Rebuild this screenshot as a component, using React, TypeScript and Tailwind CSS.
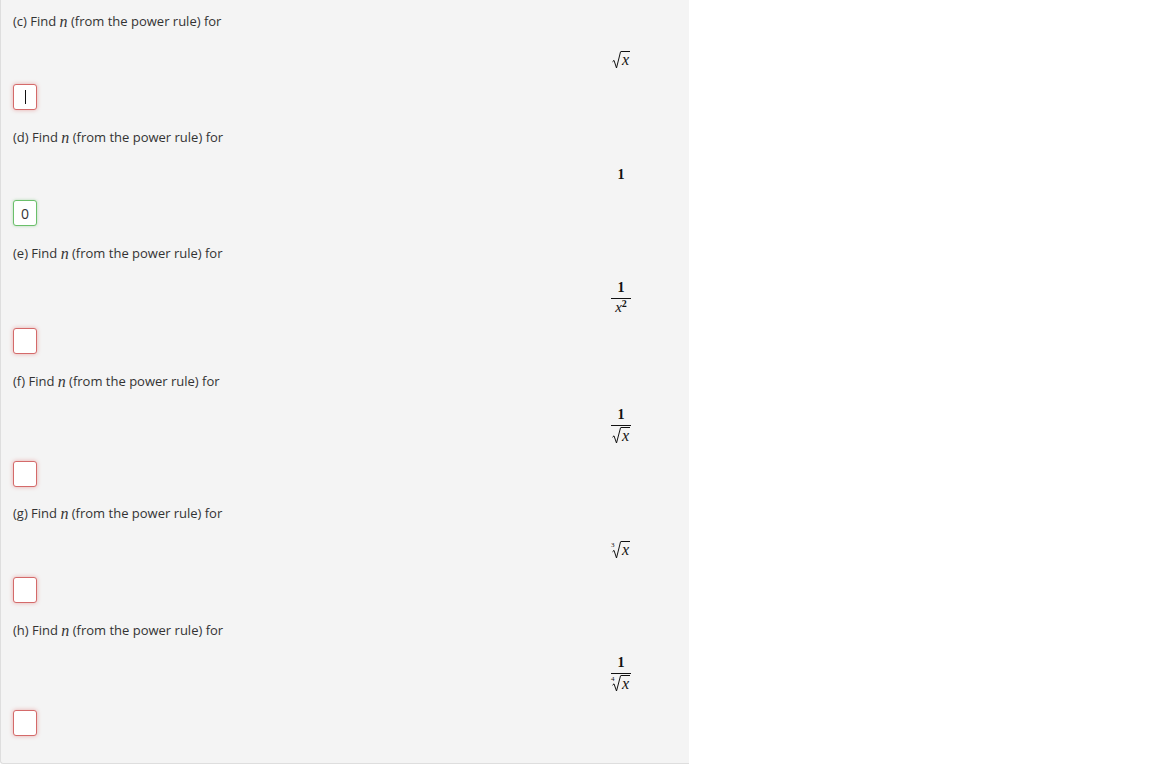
import React from 'react';

const serif = "font-['Liberation_Serif','DejaVu_Serif',serif]";

const Radical = ({ h }: { h: number }) => (
    <svg width="9" height={h} viewBox={`0 0 9 ${h}`} className="block shrink-0">
        <path d={`M0.5 ${h * 0.6} L2 ${h * 0.52} L4.5 ${h - 1} L8.6 0.5`} fill="none" stroke="#111" strokeWidth="1" />
    </svg>
);

const Sqrt = ({ index, h = 18 }: { index?: string; h?: number }) => (
    <span className="relative inline-flex items-start">
        {index && <span className={`absolute left-[-1px] top-[1px] text-[7px] leading-none ${serif}`}>{index}</span>}
        <Radical h={h} />
        <span className={`border-t border-[#111] pl-[1px] pr-[1px] text-[16px] italic leading-[16px] ${serif}`}>x</span>
    </span>
);

const Frac = ({ den }: { den: React.ReactNode }) => (
    <span className={`inline-flex flex-col items-center ${serif}`}>
        <span className="text-[14px] font-bold leading-[15px]">1</span>
        <span className="mt-[3px] h-px w-full min-w-[20px] bg-[#111]" />
        <span className="mt-[1px] flex">{den}</span>
    </span>
);

const Field = ({ value, ok, focused }: { value?: string; ok?: boolean; focused?: boolean }) => (
    <div
        className={`flex h-[26px] w-[24px] items-center justify-center rounded-[3px] border bg-white text-[14px] text-[#333] ${
            ok ? 'border-[#6bbf6b] shadow-[0_0_3px_rgba(92,184,92,0.45)]' : 'border-[#d46a6a] shadow-[0_0_4px_rgba(217,83,79,0.45)]'
        }`}
    >
        {value}
        {focused && <span className="h-[14px] w-px bg-[#111]" />}
    </div>
);

type Row = {
    label: string;
    math: React.ReactNode;
    mathH: string;
    gaps: [string, string, string];
    value?: string;
    ok?: boolean;
    focused?: boolean;
};

const rows: Row[] = [
    { label: '(c)', math: <Sqrt />, mathH: 'h-[20px]', gaps: ['mt-0', 'mt-[18px]', 'mt-[14px]'], focused: true },
    { label: '(d)', math: <span className={`text-[14px] font-bold ${serif}`}>1</span>, mathH: 'h-[20px]', gaps: ['mt-[18px]', 'mt-[16px]', 'mt-[16px]'], value: '0', ok: true },
    {
        label: '(e)',
        math: (
            <Frac
                den={
                    <span className={`text-[15px] italic leading-[15px] ${serif}`}>
                        x<sup className="text-[10px] not-italic font-bold">2</sup>
                    </span>
                }
            />
        ),
        mathH: 'h-[36px]',
        gaps: ['mt-[18px]', 'mt-[15px]', 'mt-[13px]'],
    },
    { label: '(f)', math: <Frac den={<Sqrt h={17} />} />, mathH: 'h-[42px]', gaps: ['mt-[18px]', 'mt-[12px]', 'mt-[15px]'] },
    { label: '(g)', math: <Sqrt index="3" />, mathH: 'h-[20px]', gaps: ['mt-[17px]', 'mt-[16px]', 'mt-[17px]'] },
    { label: '(h)', math: <Frac den={<Sqrt index="4" h={17} />} />, mathH: 'h-[42px]', gaps: ['mt-[18px]', 'mt-[11px]', 'mt-[16px]'] },
];

const App = () => {
    return (
        <div className="min-h-[766px] w-full bg-white">
            <div className="w-[689px] rounded-bl-[3px] border-b border-l border-[#dedede] bg-[#f4f4f4] pb-[27px] pl-[12px] pt-[12px] font-['Open_Sans','Noto_Sans',sans-serif] text-[13px] text-[#333]">
                {rows.map((r) => (
                    <div key={r.label} className={r.gaps[0]}>
                        <div className="flex h-[20px] items-center">
                            {r.label} Find&nbsp;
                            <span className={`text-[16px] italic ${serif}`}>n</span>
                            &nbsp;(from the power rule) for
                        </div>
                        <div className={`${r.gaps[1]} ml-[558px] flex w-[100px] items-center justify-center text-[#111] ${r.mathH}`}>
                            {r.math}
                        </div>
                        <div className={r.gaps[2]}>
                            <Field value={r.value} ok={r.ok} focused={r.focused} />
                        </div>
                    </div>
                ))}
            </div>
        </div>
    );
};

export default App;
